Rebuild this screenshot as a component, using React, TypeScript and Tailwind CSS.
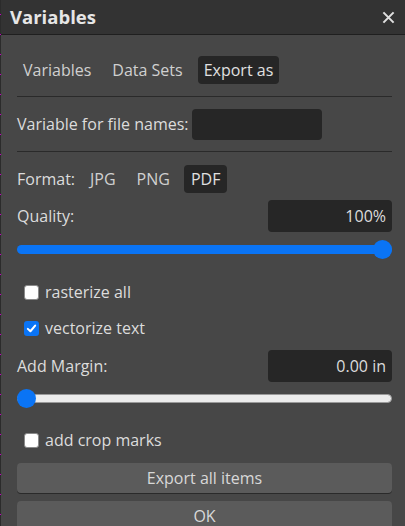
import React, { useState } from 'react';

const font = { fontFamily: '"Open Sans", "Noto Sans", sans-serif' };

const Check: React.FC<{ label: string; checked: boolean; onToggle: () => void }> = ({ label, checked, onToggle }) => (
  <button onClick={onToggle} className="flex items-center gap-[6px] h-[20px] pl-[7px] text-[16px] text-[#dcdcdc]">
    {checked ? (
      <span className="w-[15px] h-[15px] rounded-[3px] bg-[#0a74f5] flex items-center justify-center">
        <svg viewBox="0 0 12 12" className="w-[11px] h-[11px]">
          <path d="M2 6.4 L4.8 9 L10 2.8" fill="none" stroke="white" strokeWidth="2.2" strokeLinecap="round" strokeLinejoin="round" />
        </svg>
      </span>
    ) : (
      <span className="w-[15px] h-[15px] rounded-[3px] bg-white border border-[#8a8a8a]" />
    )}
    <span>{label}</span>
  </button>
);

const Slider: React.FC<{ value: number; filled: boolean }> = ({ value, filled }) => (
  <div className="relative h-[20px] flex items-center">
    <div
      className={
        filled
          ? 'w-full h-[9px] rounded-full bg-[#0a74f5]'
          : 'w-full h-[9px] rounded-full bg-[#ececec] border border-[#9a9a9a]'
      }
    />
    <div
      className="absolute top-[1px] w-[19px] h-[19px] rounded-full bg-[#0a74f5]"
      style={{ left: `calc(${value}% - ${value * 0.19}px)` }}
    />
  </div>
);

const NumberBox: React.FC<{ text: string }> = ({ text }) => (
  <div className="w-[124px] h-[32px] rounded-[4px] bg-[#262626] flex items-center justify-end pr-[6px] text-[16px] text-[#dcdcdc]">
    {text}
  </div>
);

export default function App() {
  const [tab, setTab] = useState('Export as');
  const [format, setFormat] = useState('PDF');
  const [raster, setRaster] = useState(false);
  const [vector, setVector] = useState(true);
  const [crop, setCrop] = useState(false);

  return (
    <div style={font} className="w-[405px] h-[526px] overflow-hidden flex bg-[#474747]">
      {/* ruler strip on the left edge */}
      <div className="w-[1px] shrink-0 bg-[repeating-linear-gradient(to_bottom,#2b2b2b_0px,#2b2b2b_14px,#c000c0_14px,#c000c0_15px,#2b2b2b_15px,#2b2b2b_20px)]" />
      <div className="flex-1 flex flex-col">
        <div className="h-[35px] shrink-0 bg-[#333333] border-b border-[#1f1f1f] flex items-center justify-between pl-[9px] pr-[10px]">
          <span className="text-[18.5px] font-bold text-[#e6e6e6]">Variables</span>
          <svg viewBox="0 0 14 14" className="w-[13px] h-[13px]">
            <path d="M1.5 1.5 L12.5 12.5 M12.5 1.5 L1.5 12.5" stroke="#e0e0e0" strokeWidth="2.2" />
          </svg>
        </div>

        <div className="flex flex-col pl-[16px] pr-[13px] text-[16px] text-[#dcdcdc]">
          <div className="flex items-center gap-[9px] mt-[21px] h-[28px]">
            {['Variables', 'Data Sets', 'Export as'].map((t) => (
              <button
                key={t}
                onClick={() => setTab(t)}
                className={
                  tab === t
                    ? 'h-[28px] px-[6px] rounded-[4px] bg-[#262626] text-[#e0e0e0]'
                    : 'h-[28px] px-[6px] rounded-[4px] text-[#d0d0d0]'
                }
              >
                {t}
              </button>
            ))}
          </div>

          <div className="mt-[12px] h-px bg-[#2a2a2a]" />

          <div className="flex items-center mt-[11px] h-[32px]">
            <span>Variable for file names:</span>
            <div className="ml-[3px] w-[130px] h-[31px] rounded-[4px] bg-[#262626]" />
          </div>

          <div className="mt-[11px] h-px bg-[#2a2a2a]" />

          <div className="flex items-center mt-[13px] h-[28px]">
            <span className="mr-[8px]">Format:</span>
            {['JPG', 'PNG', 'PDF'].map((f) => (
              <button
                key={f}
                onClick={() => setFormat(f)}
                className={
                  format === f
                    ? 'h-[28px] px-[7px] mr-[7px] rounded-[4px] bg-[#262626] text-[#e0e0e0]'
                    : 'h-[28px] px-[7px] mr-[7px] rounded-[4px] text-[#d0d0d0]'
                }
              >
                {f}
              </button>
            ))}
          </div>

          <div className="flex items-center justify-between mt-[7px]">
            <span>Quality:</span>
            <NumberBox text="100%" />
          </div>

          <div className="mt-[7px]">
            <Slider value={100} filled />
          </div>

          <div className="mt-[23px] flex flex-col gap-[16px]">
            <Check label="rasterize all" checked={raster} onToggle={() => setRaster(!raster)} />
            <Check label="vectorize text" checked={vector} onToggle={() => setVector(!vector)} />
          </div>

          <div className="flex items-center justify-between mt-[12px]">
            <span>Add Margin:</span>
            <NumberBox text="0.00 in" />
          </div>

          <div className="mt-[6px]">
            <Slider value={0} filled={false} />
          </div>

          <div className="mt-[22px]">
            <Check label="add crop marks" checked={crop} onToggle={() => setCrop(!crop)} />
          </div>

          <button className="mt-[13px] h-[30px] shrink-0 rounded-[4px] bg-[#5b5b5b] shadow-[0_1px_0_#2a2a2a] text-[#d8d8d8]">
            Export all items
          </button>
          <button className="mt-[8px] h-[30px] shrink-0 rounded-[4px] bg-[#5b5b5b] shadow-[0_1px_0_#2a2a2a] text-[#d8d8d8]">
            OK
          </button>
        </div>
      </div>
    </div>
  );
}
